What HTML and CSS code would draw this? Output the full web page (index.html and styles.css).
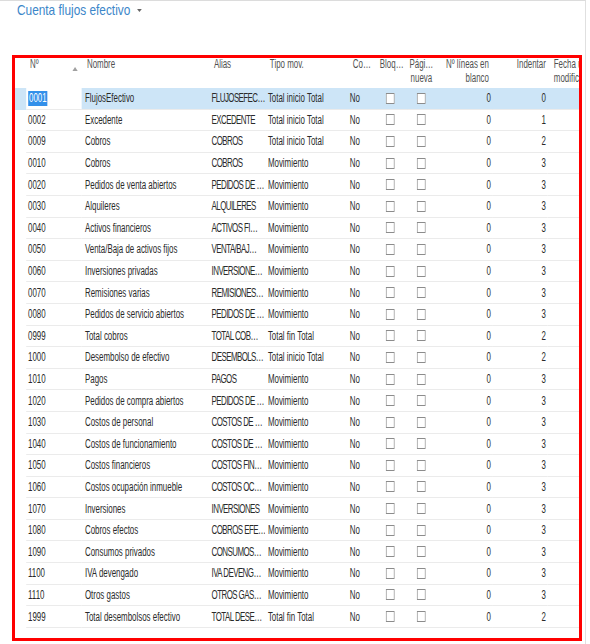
FILE: index.html
```html
<!DOCTYPE html>
<html lang="es">
<head>
<meta charset="utf-8">
<title>Cuenta flujos efectivo</title>
<link rel="stylesheet" href="styles.css">
</head>
<body>
<div class="page">
  <header class="title-bar">
    <h1 class="title">Cuenta flujos efectivo<span class="caret"></span></h1>
  </header>
  <section class="frame">
    <div class="grid">
      <div class="cols head">
        <div class="gut"></div>
        <div class="h-no"><span>Nº</span><span class="sort"></span></div>
        <div class="h-nombre">Nombre</div>
        <div class="h-alias">Alias</div>
        <div class="h-tipo">Tipo mov.</div>
        <div class="h-co">Co…</div>
        <div class="h-bloq">Bloq…</div>
        <div class="h-pagi">Pági…<br>nueva</div>
        <div class="h-num">Nº líneas en<br>blanco</div>
        <div class="h-ind">Indentar</div>
        <div class="h-fecha">Fecha últ.<br>modificación</div>
      </div>
      <div class="body">
        <div class="cols row sel"><div class="gut"></div><div class="d-no edit"><span class="selected-text">0001</span></div><div class="d-nombre">FlujosEfectivo</div><div class="d-alias">FLUJOSEFEC…</div><div class="d-tipo">Total inicio Total</div><div class="d-co">No</div><div class="d-bloq"><span class="cb"></span></div><div class="d-pagi"><span class="cb"></span></div><div class="d-num">0</div><div class="d-ind">0</div><div class="d-fecha"></div></div>
        <div class="cols row"><div class="gut"></div><div class="d-no">0002</div><div class="d-nombre">Excedente</div><div class="d-alias">EXCEDENTE</div><div class="d-tipo">Total inicio Total</div><div class="d-co">No</div><div class="d-bloq"><span class="cb"></span></div><div class="d-pagi"><span class="cb"></span></div><div class="d-num">0</div><div class="d-ind">1</div><div class="d-fecha"></div></div>
        <div class="cols row"><div class="gut"></div><div class="d-no">0009</div><div class="d-nombre">Cobros</div><div class="d-alias">COBROS</div><div class="d-tipo">Total inicio Total</div><div class="d-co">No</div><div class="d-bloq"><span class="cb"></span></div><div class="d-pagi"><span class="cb"></span></div><div class="d-num">0</div><div class="d-ind">2</div><div class="d-fecha"></div></div>
        <div class="cols row"><div class="gut"></div><div class="d-no">0010</div><div class="d-nombre">Cobros</div><div class="d-alias">COBROS</div><div class="d-tipo">Movimiento</div><div class="d-co">No</div><div class="d-bloq"><span class="cb"></span></div><div class="d-pagi"><span class="cb"></span></div><div class="d-num">0</div><div class="d-ind">3</div><div class="d-fecha"></div></div>
        <div class="cols row"><div class="gut"></div><div class="d-no">0020</div><div class="d-nombre">Pedidos de venta abiertos</div><div class="d-alias">PEDIDOS DE …</div><div class="d-tipo">Movimiento</div><div class="d-co">No</div><div class="d-bloq"><span class="cb"></span></div><div class="d-pagi"><span class="cb"></span></div><div class="d-num">0</div><div class="d-ind">3</div><div class="d-fecha"></div></div>
        <div class="cols row"><div class="gut"></div><div class="d-no">0030</div><div class="d-nombre">Alquileres</div><div class="d-alias">ALQUILERES</div><div class="d-tipo">Movimiento</div><div class="d-co">No</div><div class="d-bloq"><span class="cb"></span></div><div class="d-pagi"><span class="cb"></span></div><div class="d-num">0</div><div class="d-ind">3</div><div class="d-fecha"></div></div>
        <div class="cols row"><div class="gut"></div><div class="d-no">0040</div><div class="d-nombre">Activos financieros</div><div class="d-alias">ACTIVOS FI…</div><div class="d-tipo">Movimiento</div><div class="d-co">No</div><div class="d-bloq"><span class="cb"></span></div><div class="d-pagi"><span class="cb"></span></div><div class="d-num">0</div><div class="d-ind">3</div><div class="d-fecha"></div></div>
        <div class="cols row"><div class="gut"></div><div class="d-no">0050</div><div class="d-nombre">Venta/Baja de activos fijos</div><div class="d-alias">VENTA/BAJ…</div><div class="d-tipo">Movimiento</div><div class="d-co">No</div><div class="d-bloq"><span class="cb"></span></div><div class="d-pagi"><span class="cb"></span></div><div class="d-num">0</div><div class="d-ind">3</div><div class="d-fecha"></div></div>
        <div class="cols row"><div class="gut"></div><div class="d-no">0060</div><div class="d-nombre">Inversiones privadas</div><div class="d-alias">INVERSIONE…</div><div class="d-tipo">Movimiento</div><div class="d-co">No</div><div class="d-bloq"><span class="cb"></span></div><div class="d-pagi"><span class="cb"></span></div><div class="d-num">0</div><div class="d-ind">3</div><div class="d-fecha"></div></div>
        <div class="cols row"><div class="gut"></div><div class="d-no">0070</div><div class="d-nombre">Remisiones varias</div><div class="d-alias">REMISIONES…</div><div class="d-tipo">Movimiento</div><div class="d-co">No</div><div class="d-bloq"><span class="cb"></span></div><div class="d-pagi"><span class="cb"></span></div><div class="d-num">0</div><div class="d-ind">3</div><div class="d-fecha"></div></div>
        <div class="cols row"><div class="gut"></div><div class="d-no">0080</div><div class="d-nombre">Pedidos de servicio abiertos</div><div class="d-alias">PEDIDOS DE …</div><div class="d-tipo">Movimiento</div><div class="d-co">No</div><div class="d-bloq"><span class="cb"></span></div><div class="d-pagi"><span class="cb"></span></div><div class="d-num">0</div><div class="d-ind">3</div><div class="d-fecha"></div></div>
        <div class="cols row"><div class="gut"></div><div class="d-no">0999</div><div class="d-nombre">Total cobros</div><div class="d-alias">TOTAL COB…</div><div class="d-tipo">Total fin Total</div><div class="d-co">No</div><div class="d-bloq"><span class="cb"></span></div><div class="d-pagi"><span class="cb"></span></div><div class="d-num">0</div><div class="d-ind">2</div><div class="d-fecha"></div></div>
        <div class="cols row"><div class="gut"></div><div class="d-no">1000</div><div class="d-nombre">Desembolso de efectivo</div><div class="d-alias">DESEMBOLS…</div><div class="d-tipo">Total inicio Total</div><div class="d-co">No</div><div class="d-bloq"><span class="cb"></span></div><div class="d-pagi"><span class="cb"></span></div><div class="d-num">0</div><div class="d-ind">2</div><div class="d-fecha"></div></div>
        <div class="cols row"><div class="gut"></div><div class="d-no">1010</div><div class="d-nombre">Pagos</div><div class="d-alias">PAGOS</div><div class="d-tipo">Movimiento</div><div class="d-co">No</div><div class="d-bloq"><span class="cb"></span></div><div class="d-pagi"><span class="cb"></span></div><div class="d-num">0</div><div class="d-ind">3</div><div class="d-fecha"></div></div>
        <div class="cols row"><div class="gut"></div><div class="d-no">1020</div><div class="d-nombre">Pedidos de compra abiertos</div><div class="d-alias">PEDIDOS DE …</div><div class="d-tipo">Movimiento</div><div class="d-co">No</div><div class="d-bloq"><span class="cb"></span></div><div class="d-pagi"><span class="cb"></span></div><div class="d-num">0</div><div class="d-ind">3</div><div class="d-fecha"></div></div>
        <div class="cols row"><div class="gut"></div><div class="d-no">1030</div><div class="d-nombre">Costos de personal</div><div class="d-alias">COSTOS DE …</div><div class="d-tipo">Movimiento</div><div class="d-co">No</div><div class="d-bloq"><span class="cb"></span></div><div class="d-pagi"><span class="cb"></span></div><div class="d-num">0</div><div class="d-ind">3</div><div class="d-fecha"></div></div>
        <div class="cols row"><div class="gut"></div><div class="d-no">1040</div><div class="d-nombre">Costos de funcionamiento</div><div class="d-alias">COSTOS DE …</div><div class="d-tipo">Movimiento</div><div class="d-co">No</div><div class="d-bloq"><span class="cb"></span></div><div class="d-pagi"><span class="cb"></span></div><div class="d-num">0</div><div class="d-ind">3</div><div class="d-fecha"></div></div>
        <div class="cols row"><div class="gut"></div><div class="d-no">1050</div><div class="d-nombre">Costos financieros</div><div class="d-alias">COSTOS FIN…</div><div class="d-tipo">Movimiento</div><div class="d-co">No</div><div class="d-bloq"><span class="cb"></span></div><div class="d-pagi"><span class="cb"></span></div><div class="d-num">0</div><div class="d-ind">3</div><div class="d-fecha"></div></div>
        <div class="cols row"><div class="gut"></div><div class="d-no">1060</div><div class="d-nombre">Costos ocupación inmueble</div><div class="d-alias">COSTOS OC…</div><div class="d-tipo">Movimiento</div><div class="d-co">No</div><div class="d-bloq"><span class="cb"></span></div><div class="d-pagi"><span class="cb"></span></div><div class="d-num">0</div><div class="d-ind">3</div><div class="d-fecha"></div></div>
        <div class="cols row"><div class="gut"></div><div class="d-no">1070</div><div class="d-nombre">Inversiones</div><div class="d-alias">INVERSIONES</div><div class="d-tipo">Movimiento</div><div class="d-co">No</div><div class="d-bloq"><span class="cb"></span></div><div class="d-pagi"><span class="cb"></span></div><div class="d-num">0</div><div class="d-ind">3</div><div class="d-fecha"></div></div>
        <div class="cols row"><div class="gut"></div><div class="d-no">1080</div><div class="d-nombre">Cobros efectos</div><div class="d-alias">COBROS EFE…</div><div class="d-tipo">Movimiento</div><div class="d-co">No</div><div class="d-bloq"><span class="cb"></span></div><div class="d-pagi"><span class="cb"></span></div><div class="d-num">0</div><div class="d-ind">3</div><div class="d-fecha"></div></div>
        <div class="cols row"><div class="gut"></div><div class="d-no">1090</div><div class="d-nombre">Consumos privados</div><div class="d-alias">CONSUMOS…</div><div class="d-tipo">Movimiento</div><div class="d-co">No</div><div class="d-bloq"><span class="cb"></span></div><div class="d-pagi"><span class="cb"></span></div><div class="d-num">0</div><div class="d-ind">3</div><div class="d-fecha"></div></div>
        <div class="cols row"><div class="gut"></div><div class="d-no">1100</div><div class="d-nombre">IVA devengado</div><div class="d-alias">IVA DEVENG…</div><div class="d-tipo">Movimiento</div><div class="d-co">No</div><div class="d-bloq"><span class="cb"></span></div><div class="d-pagi"><span class="cb"></span></div><div class="d-num">0</div><div class="d-ind">3</div><div class="d-fecha"></div></div>
        <div class="cols row"><div class="gut"></div><div class="d-no">1110</div><div class="d-nombre">Otros gastos</div><div class="d-alias">OTROS GAS…</div><div class="d-tipo">Movimiento</div><div class="d-co">No</div><div class="d-bloq"><span class="cb"></span></div><div class="d-pagi"><span class="cb"></span></div><div class="d-num">0</div><div class="d-ind">3</div><div class="d-fecha"></div></div>
        <div class="cols row"><div class="gut"></div><div class="d-no">1999</div><div class="d-nombre">Total desembolsos efectivo</div><div class="d-alias">TOTAL DESE…</div><div class="d-tipo">Total fin Total</div><div class="d-co">No</div><div class="d-bloq"><span class="cb"></span></div><div class="d-pagi"><span class="cb"></span></div><div class="d-num">0</div><div class="d-ind">2</div><div class="d-fecha"></div></div>
      </div>
    </div>
  </section>
</div>
</body>
</html>
```

FILE: styles.css
```css
html, body {
  margin: 0;
  padding: 0;
  background: #ffffff;
}

body {
  font-family: "Liberation Sans", Arial, sans-serif;
  color: #2a2a2a;
}

.page {
  width: 586px;
  height: 644px;
  box-sizing: border-box;
  border-top: 1px solid #dcdcdc;
  border-right: 1px solid #e0e0e0;
}

/* ---------- title ---------- */
.title-bar {
  height: 54px;
  box-sizing: border-box;
  padding-left: 17px;
}

.title {
  margin: 0;
  width: 200px;
  font-size: 15px;
  line-height: 18px;
  font-weight: normal;
  color: #3b86c9;
  white-space: nowrap;
  transform: scaleX(0.79);
  transform-origin: left top;
}

.caret {
  display: inline-block;
  vertical-align: top;
  width: 0;
  height: 0;
  border-left: 3px solid transparent;
  border-right: 3px solid transparent;
  border-top: 3px solid #666666;
  margin-left: 9px;
  margin-top: 8px;
}

/* ---------- framed list ---------- */
.frame {
  margin-left: 12px;
  width: 570px;
  height: 586px;
  box-sizing: border-box;
  border: 3px solid #ff0000;
  overflow: hidden;
}

/* The list is drawn in a condensed face: the grid is laid out
   at natural width and narrowed horizontally. */
.grid {
  width: 917px;
  transform: scaleX(0.66);
  transform-origin: left top;
}

.cols {
  display: grid;
  grid-template-columns: 16.7px 84.8px 192.4px 84.8px 124.2px 43.9px 47px 50px 80.3px 83.3px 109.1px;
}

.head {
  height: 30px;
  font-size: 12px;
  line-height: 13.5px;
  color: #505050;
}

.head > div {
  white-space: nowrap;
  overflow: hidden;
}

.h-no {
  display: flex;
  justify-content: space-between;
  align-items: flex-start;
  padding-left: 6px;
  padding-right: 6px;
}

.sort {
  width: 0;
  height: 0;
  border-left: 4.5px solid transparent;
  border-right: 4.5px solid transparent;
  border-bottom: 4px solid #a0a0a0;
  margin-top: 9px;
}

.h-nombre, .h-alias, .h-tipo { padding-left: 7.5px; }
.h-co { padding-left: 9px; }
.h-bloq { padding-left: 6px; }
.h-pagi { text-align: center; padding-right: 6px; }
.h-num { text-align: right; padding-right: 6px; }
.h-ind { text-align: right; padding-right: 3px; }
.h-fecha { padding-left: 9px; }

.row {
  height: 21.6px;
  font-size: 12px;
  color: #2a2a2a;
}

.row > div {
  display: flex;
  align-items: center;
  white-space: nowrap;
  overflow: hidden;
  box-sizing: border-box;
  border-bottom: 1px solid #ebebeb;
}

.row > .gut {
  border-bottom: none;
}

.sel {
  background: #cde5f7;
}

.d-no { padding-left: 3px; }
.d-nombre, .d-tipo, .d-co { padding-left: 4.5px; }
.d-alias { padding-left: 4px; letter-spacing: -0.85px; }
.d-bloq, .d-pagi { padding-left: 15px; }
.d-num, .d-ind { justify-content: flex-end; padding-right: 3px; }

.edit {
  background: #ffffff;
}

.selected-text {
  background: #3390ea;
  color: #ffffff;
  padding: 1px 1.5px;
  line-height: 13px;
}

.cb {
  display: block;
  width: 13.6px;
  height: 11px;
  box-sizing: border-box;
  border: 1px solid #8c8c8c;
  background: #ffffff;
}
```
